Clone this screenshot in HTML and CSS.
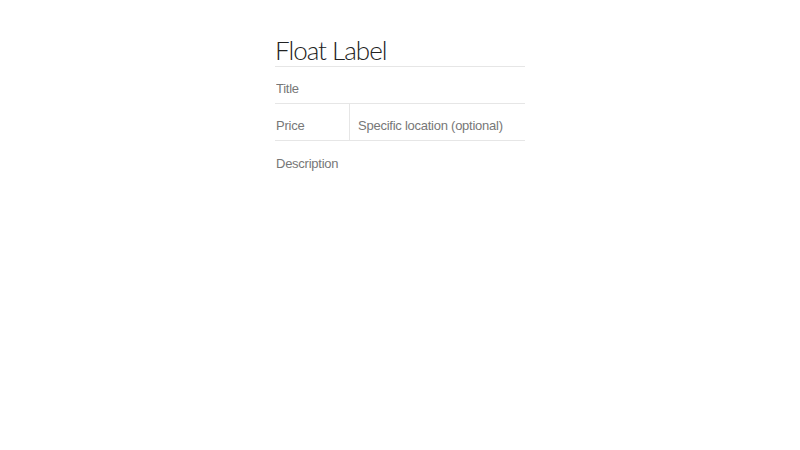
FILE: index.html
```html
<!DOCTYPE html>
<html>
<head>
<meta charset="utf-8">
<link rel="stylesheet" href="styles.css">
</head>
<body>
<form class="form">
  <h1 class="heading">Float Label</h1>
  <div class="row">
    <input class="field" type="text" placeholder="Title">
  </div>
  <div class="row">
    <input class="field price" type="text" placeholder="Price">
    <input class="field location" type="text" placeholder="Specific location (optional)">
  </div>
  <div class="row last">
    <textarea class="field area" placeholder="Description"></textarea>
  </div>
</form>
</body>
</html>
```
FILE: styles.css
```css
html, body {
  margin: 0;
  padding: 0;
  background: #fff;
}
.form {
  width: 250px;
  margin: 0 auto;
  padding-top: 34px;
  font-family: "Liberation Sans", Arial, sans-serif;
}
.heading {
  margin: 0;
  font-family: Lato, "Open Sans", sans-serif;
  font-weight: 300;
  font-size: 26px;
  letter-spacing: -1px;
  line-height: 32px;
  color: #222;
  border-bottom: 1px solid #e6e6e6;
  padding-bottom: 0;
}
.row {
  display: flex;
  height: 36px;
  border-bottom: 1px solid #e6e6e6;
}
.row.last {
  border-bottom: none;
}
.field {
  border: none;
  outline: none;
  margin: 0;
  padding: 7px 0 0 1px;
  font-family: "Liberation Sans", Arial, sans-serif;
  font-size: 13px;
  letter-spacing: -0.25px;
  color: #333;
  background: transparent;
  flex: 1;
  min-width: 0;
}
.field::placeholder {
  color: #777;
}
.price {
  flex: 0 0 73px;
  border-right: 1px solid #e6e6e6;
}
.location {
  padding-left: 8px;
}
.area {
  resize: none;
  height: 40px;
  padding-top: 15px;
  box-sizing: border-box;
  line-height: 16px;
}
```
